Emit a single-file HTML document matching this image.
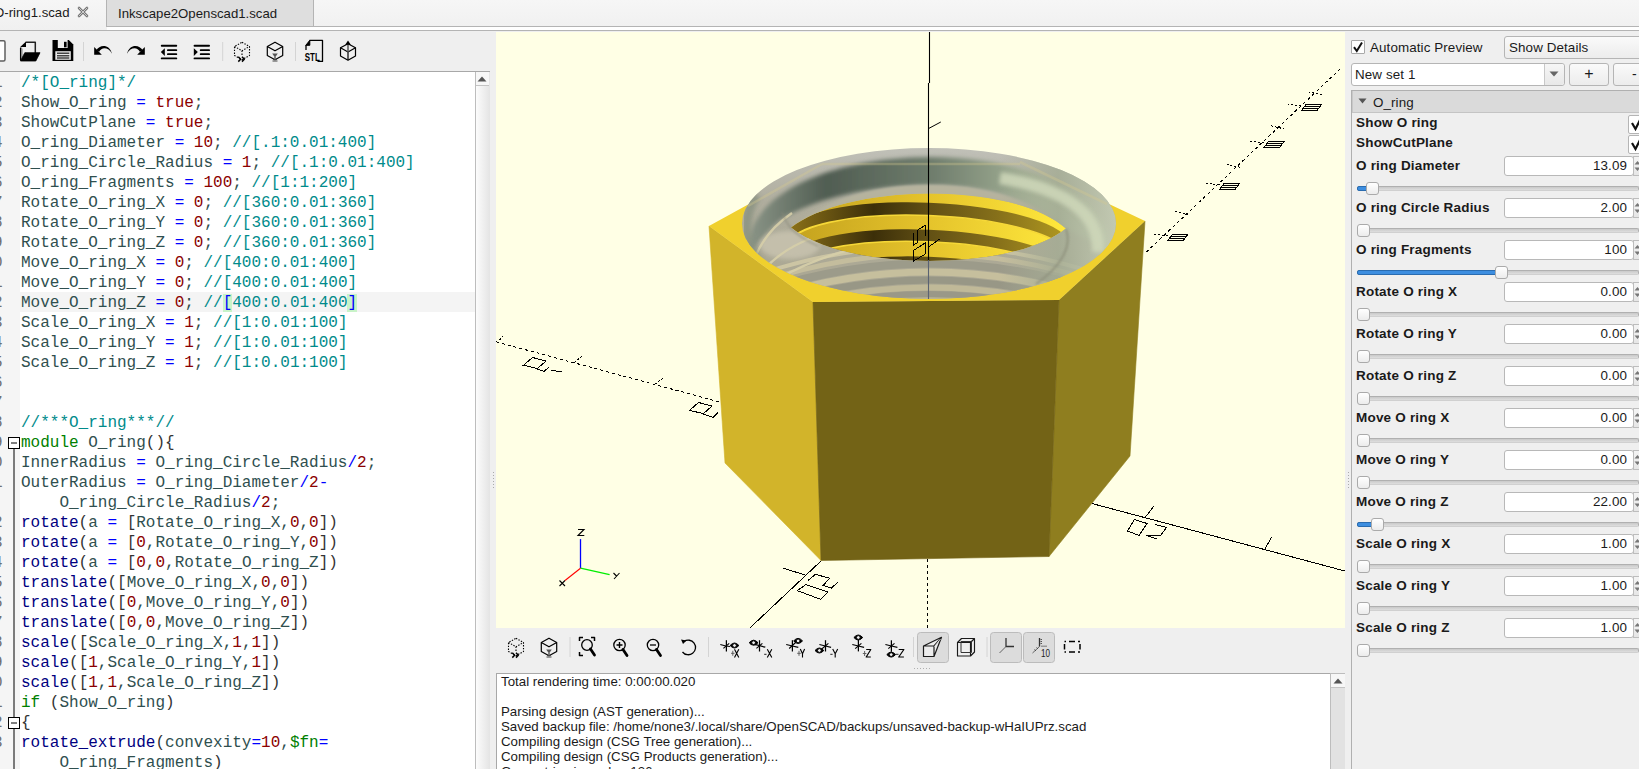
<!DOCTYPE html>
<html><head><meta charset="utf-8">
<style>
*{box-sizing:border-box;margin:0;padding:0}
html,body{width:1639px;height:769px;overflow:hidden;background:#efefef;font-family:"Liberation Sans",sans-serif;font-size:13px;color:#1a1a1a}
.a{position:absolute}
#tabs{left:0;top:0;width:1639px;height:31px;background:linear-gradient(#f6f6f6,#f0f0f0)}
.code{font-family:"Liberation Mono",monospace;font-size:16px;line-height:20px;white-space:pre;color:#2f4f4f}
.c{color:#008b8b}.n{color:#8b0000}.o{color:#0000ff}.k{color:#008000}.b{color:#000080}.p{color:#333}
.lbl{font-weight:bold;font-size:13.5px;letter-spacing:0.2px}
.spin{background:#fff;border:1px solid #b8b8b8;border-radius:3px;height:20px;width:130px;left:1504px;text-align:right;padding-right:6px;line-height:18px}
.groove{left:1357px;width:282px;height:5px;background:linear-gradient(#c9c9c9,#dedede);border:1px solid #b0b0b0;border-bottom-color:#d0d0d0;border-radius:2px}
.fill{left:1357px;height:5px;background:#3d8ee0;border:1px solid #2a6cb0;border-radius:2px}
.handle{width:13px;height:13px;background:linear-gradient(#fff,#ececec);border:1px solid #aaa;border-radius:3px}
.bm{background:#c8f3c8;color:#0000ff}
.ui{font-size:13.4px;letter-spacing:0.1px}
</style></head><body>
<!-- tab bar -->
<div id="tabs" class="a"></div>
<div class="a" style="left:106px;top:0;width:208px;height:27px;background:#dedede;border:1px solid #b4b4b4;border-top:none"></div>
<div class="a" style="left:106px;top:26px;width:1533px;height:1px;background:#b4b4b4"></div>
<div class="a" style="left:107px;top:27px;width:1532px;height:3px;background:#fff"></div>
<div class="a" style="left:0;top:30px;width:1639px;height:1px;background:#b4b4b4"></div>
<div class="a" style="left:-6px;top:4px;line-height:17px;font-size:13.2px">O-ring1.scad</div>
<div class="a" style="left:118px;top:5px;line-height:17px;font-size:13.2px">Inkscape2Openscad1.scad</div>
<svg class="a" style="left:77px;top:6px" width="12" height="12"><path d="M2 2L10 10M10 2L2 10" stroke="#777" stroke-width="2.6" stroke-linecap="round"/><path d="M2 2L10 10M10 2L2 10" stroke="#ccc" stroke-width="1" stroke-linecap="round"/></svg>

<svg class="a" style="left:0;top:0" width="370" height="71" viewBox="0 0 370 71">
<g fill="none" stroke="#000" stroke-linejoin="round">
 <!-- new doc clipped -->
 <rect x="-10" y="40.8" width="15" height="20.3" rx="1.5" fill="#fff" stroke="#606060" stroke-width="1.5"/>
 <!-- open folder -->
 <path d="M25.8 42.3H35.3V53" stroke-width="1.5" stroke="#222"/>
 <path d="M20.7 47.5V60.5" stroke-width="1.5"/>
 <path d="M22.3 48.5V58.5" stroke-width="1" stroke="#aaa"/>
 <path d="M20.2 47L26 41.5V47Z" fill="#000" stroke="none"/>
 <path d="M20.5 61L24.8 52.7H40L35.8 61Z" fill="#000" stroke="#000" stroke-width="0.8"/>
 <!-- save -->
 <path d="M52.5 40H68.8L73.3 44.5V61H52.5Z" fill="#000" stroke="none"/>
 <rect x="57.8" y="40" width="9.8" height="8" fill="#efefef" stroke="none"/>
 <rect x="64" y="41.8" width="2.6" height="5.5" fill="#000" stroke="none"/>
 <rect x="55.3" y="51.2" width="15.5" height="8.6" fill="#e8e8e8" stroke="none"/>
 <path d="M57 53.3H69.3M57 55.7H69.3M57 58H69.3" stroke="#444" stroke-width="1.4"/>
 <!-- separators -->
 <path d="M83.5 42V61M222.7 42V61M295.5 42V61" stroke="#d4d4d4" stroke-width="1"/>
 <!-- undo -->
 <path d="M96.3 50.2C99.5 44.5 109.5 43.5 112 53.8C108.5 47 101.5 46.8 99.2 51.8Z" fill="#000" stroke="none"/>
 <path d="M94.2 47V54.7H101.8Z" fill="#000" stroke="none"/>
 <!-- redo -->
 <path d="M142.7 50.2C139.5 44.5 129.5 43.5 127 53.8C130.5 47 137.5 46.8 139.8 51.8Z" fill="#000" stroke="none"/>
 <path d="M144.8 47V54.7H137.2Z" fill="#000" stroke="none"/>
 <!-- unindent -->
 <g fill="#000" stroke="none">
  <rect x="160.8" y="44.8" width="16.4" height="1.9" rx="0.9"/>
  <rect x="167" y="49.2" width="10.2" height="1.9" rx="0.9"/>
  <rect x="167" y="53.2" width="10.2" height="1.9" rx="0.9"/>
  <rect x="160.8" y="57.4" width="16.4" height="1.9" rx="0.9"/>
  <path d="M160.8 52.1L164.8 48.3V55.9Z"/>
  <rect x="193.6" y="44.8" width="16.4" height="1.9" rx="0.9"/>
  <rect x="199.8" y="49.2" width="10.2" height="1.9" rx="0.9"/>
  <rect x="199.8" y="53.2" width="10.2" height="1.9" rx="0.9"/>
  <rect x="193.6" y="57.4" width="16.4" height="1.9" rx="0.9"/>
  <path d="M197.8 52.1L193.8 48.3V55.9Z"/>
 </g>
 <!-- preview dotted cube -->
 <g stroke-width="1.1" stroke-dasharray="1.4 1.4">
  <path d="M242 42.3L249.5 46.5V55.5L242 59.7L234.5 55.5V46.5Z"/>
  <path d="M234.5 46.5L242 50.7L249.5 46.5M242 50.7V56"/>
 </g>
 <path d="M238.3 56.8L240.6 59.3L238.3 61.6M242 56.8L244.3 59.3L242 61.6" stroke-width="1.5"/>
 <!-- render cube -->
 <g stroke-width="1.2">
  <path d="M275 42.2L282.7 46.5V55.5L275 59.8L267.3 55.5V46.5Z"/>
  <path d="M267.3 46.5L275 50.8L282.7 46.5"/>
 </g>
 <path d="M272.2 53.5H277.8L275 57.5Z" fill="#555" stroke="none"/>
 <path d="M275 57V59M272.5 61H277.5M273 59.5H277" stroke="#444" stroke-width="1.2"/>
 <!-- STL -->
 <path d="M309.5 40.3H322.5V61.4H317.5" stroke-width="1.3"/>
 <path d="M305.8 45.3L309.8 40.3V45.3Z" fill="#000" stroke="#000" stroke-width="1"/>
 <path d="M306 45V50" stroke-width="1.3"/>
 <text x="304.8" y="61.3" font-family="Liberation Sans" font-weight="bold" font-size="11.5" fill="#000" stroke="none" textLength="15" lengthAdjust="spacingAndGlyphs">STL</text>
 <!-- export cube -->
 <g stroke-width="1.2">
  <path d="M348 43.8L355.5 47.8V56L348 60.2L340.5 56V47.8Z"/>
  <path d="M340.5 47.8L348 52L355.5 47.8M348 52V60"/>
 </g>
 <path d="M348 53V43" stroke="#555" stroke-width="1.5"/>
 <path d="M345.2 44.8L348 40.6L350.8 44.8Z" fill="#000" stroke="none"/>
</g>
</svg>

<!-- editor -->
<div class="a" style="left:0;top:71px;width:490px;height:698px;background:#fff;border-top:1px solid #a8a8a8;border-right:1px solid #a8a8a8"></div>
<div class="a" style="left:0;top:72px;width:20px;height:697px;background:#f5f5f5"></div>
<div class="a" style="left:20px;top:292px;width:455px;height:20px;background:#f4f4f4"></div>
<div id="code" class="a code" style="left:21px;top:73px"><span class="c">/*[O_ring]*/</span>
Show_O_ring <span class="o">=</span> <span class="n">true</span>;
ShowCutPlane <span class="o">=</span> <span class="n">true</span>;
O_ring_Diameter <span class="o">=</span> <span class="n">10</span>; <span class="c">//[.1:0.01:400]</span>
O_ring_Circle_Radius <span class="o">=</span> <span class="n">1</span>; <span class="c">//[.1:0.01:400]</span>
O_ring_Fragments <span class="o">=</span> <span class="n">100</span>; <span class="c">//[1:1:200]</span>
Rotate_O_ring_X <span class="o">=</span> <span class="n">0</span>; <span class="c">//[360:0.01:360]</span>
Rotate_O_ring_Y <span class="o">=</span> <span class="n">0</span>; <span class="c">//[360:0.01:360]</span>
Rotate_O_ring_Z <span class="o">=</span> <span class="n">0</span>; <span class="c">//[360:0.01:360]</span>
Move_O_ring_X <span class="o">=</span> <span class="n">0</span>; <span class="c">//[400:0.01:400]</span>
Move_O_ring_Y <span class="o">=</span> <span class="n">0</span>; <span class="c">//[400:0.01:400]</span>
Move_O_ring_Z <span class="o">=</span> <span class="n">0</span>; <span class="c">//<span class="bm">[</span>400:0.01:400<span class="bm">]</span></span>
Scale_O_ring_X <span class="o">=</span> <span class="n">1</span>; <span class="c">//[1:0.01:100]</span>
Scale_O_ring_Y <span class="o">=</span> <span class="n">1</span>; <span class="c">//[1:0.01:100]</span>
Scale_O_ring_Z <span class="o">=</span> <span class="n">1</span>; <span class="c">//[1:0.01:100]</span>


<span class="c">//***O_ring***//</span>
<span class="k">module</span> O_ring<span class="p">(</span><span class="p">)</span><span class="p">{</span>
InnerRadius <span class="o">=</span> O_ring_Circle_Radius<span class="o">/</span><span class="n">2</span>;
OuterRadius <span class="o">=</span> O_ring_Diameter<span class="o">/</span><span class="n">2</span><span class="o">-</span>
    O_ring_Circle_Radius<span class="o">/</span><span class="n">2</span>;
<span class="b">rotate</span><span class="p">(</span>a <span class="o">=</span> <span class="p">[</span>Rotate_O_ring_X,<span class="n">0</span>,<span class="n">0</span><span class="p">]</span><span class="p">)</span>
<span class="b">rotate</span><span class="p">(</span>a <span class="o">=</span> <span class="p">[</span><span class="n">0</span>,Rotate_O_ring_Y,<span class="n">0</span><span class="p">]</span><span class="p">)</span>
<span class="b">rotate</span><span class="p">(</span>a <span class="o">=</span> <span class="p">[</span><span class="n">0</span>,<span class="n">0</span>,Rotate_O_ring_Z<span class="p">]</span><span class="p">)</span>
<span class="b">translate</span><span class="p">(</span><span class="p">[</span>Move_O_ring_X,<span class="n">0</span>,<span class="n">0</span><span class="p">]</span><span class="p">)</span>
<span class="b">translate</span><span class="p">(</span><span class="p">[</span><span class="n">0</span>,Move_O_ring_Y,<span class="n">0</span><span class="p">]</span><span class="p">)</span>
<span class="b">translate</span><span class="p">(</span><span class="p">[</span><span class="n">0</span>,<span class="n">0</span>,Move_O_ring_Z<span class="p">]</span><span class="p">)</span>
<span class="b">scale</span><span class="p">(</span><span class="p">[</span>Scale_O_ring_X,<span class="n">1</span>,<span class="n">1</span><span class="p">]</span><span class="p">)</span>
<span class="b">scale</span><span class="p">(</span><span class="p">[</span><span class="n">1</span>,Scale_O_ring_Y,<span class="n">1</span><span class="p">]</span><span class="p">)</span>
<span class="b">scale</span><span class="p">(</span><span class="p">[</span><span class="n">1</span>,<span class="n">1</span>,Scale_O_ring_Z<span class="p">]</span><span class="p">)</span>
<span class="k">if</span> <span class="p">(</span>Show_O_ring<span class="p">)</span>
<span class="p">{</span>
<span class="b">rotate_extrude</span><span class="p">(</span>convexity<span class="o">=</span><span class="n">10</span>,<span class="k">$fn</span><span class="o">=</span>
    O_ring_Fragments<span class="p">)</span></div>
<div class="a code" style="left:-41.5px;top:73px;width:44px;text-align:right;color:#707070">1
2
3
4
5
6
7
8
9
10
11
12
13
14
15
16
17
18
19
20
21

22
23
24
25
26
27
28
29
30
31
32
33
</div>

<svg class="a" style="left:0;top:430px" width="22" height="339"><g fill="#fff" stroke="#000" stroke-width="1"><rect x="8.5" y="7.5" width="11" height="11"/><rect x="8.5" y="287.5" width="11" height="11"/></g><path d="M11 13H17M11 293H17M14 18.5V287.5M14 298.5V339" stroke="#000" stroke-width="1"/></svg>
<svg class="a" style="left:490px;top:470px" width="6" height="20"><path d="M3.5 2V19" stroke="#aaa" stroke-dasharray="1 2"/></svg>
<svg class="a" style="left:1345px;top:470px" width="6" height="20"><path d="M3.5 2V19" stroke="#aaa" stroke-dasharray="1 2"/></svg>
<!-- viewer -->
<svg class="a" style="left:496px;top:32px" width="849" height="596" viewBox="496 32 849 596" shape-rendering="geometricPrecision">
<defs>
<clipPath id="hole"><path d="M791 227.5C818 207 868 194 929 193.5C992 194 1040 206 1066 228.5C1040 249 992 260.5 929 261C868 260.5 818 249 791 227.5Z"/></clipPath>
<linearGradient id="gdark" x1="791" x2="1066" gradientUnits="userSpaceOnUse"><stop offset="0" stop-color="#8a7018"/><stop offset="0.3" stop-color="#3c2f09"/><stop offset="0.5" stop-color="#625014"/><stop offset="0.75" stop-color="#86701a"/><stop offset="1" stop-color="#b09820"/></linearGradient>
<linearGradient id="gyel" x1="791" x2="1066" gradientUnits="userSpaceOnUse"><stop offset="0" stop-color="#c4a21e"/><stop offset="0.45" stop-color="#e2c02a"/><stop offset="1" stop-color="#ffe83c"/></linearGradient>
<linearGradient id="gback" x1="745" x2="1115" gradientUnits="userSpaceOnUse"><stop offset="0" stop-color="#8e988a"/><stop offset="0.22" stop-color="#505d52"/><stop offset="0.5" stop-color="#6e7c6c"/><stop offset="0.8" stop-color="#a9b69a"/><stop offset="1" stop-color="#c8d2b2"/></linearGradient>
<linearGradient id="gfront" x1="745" x2="1115" gradientUnits="userSpaceOnUse"><stop offset="0" stop-color="#b5b3a3"/><stop offset="0.3" stop-color="#c2bca4"/><stop offset="0.6" stop-color="#b0aa90"/><stop offset="1" stop-color="#9ea28a"/></linearGradient>
<linearGradient id="grim" x1="0" y1="148" x2="0" y2="300" gradientUnits="userSpaceOnUse"><stop offset="0" stop-color="#c4c4bc"/><stop offset="1" stop-color="#b8b6a6"/></linearGradient>
<clipPath id="torus"><ellipse cx="929" cy="223.5" rx="187" ry="75.5"/></clipPath>
</defs>
<rect x="496" y="32" width="849" height="596" fill="#ffffe5"/>
<g stroke="#000" stroke-width="1" fill="none" stroke-dasharray="3 3" shape-rendering="crispEdges">
<path d="M496 341.8L722 402.6"/>
<path d="M1146.4 252L1342.3 66.9"/>
<path d="M927.6 559V628"/>
</g>
<g stroke="#000" stroke-width="1" fill="none" shape-rendering="crispEdges">
<path d="M497 343L503 336" stroke-dasharray="2 2"/>
<path d="M574.2 362.5L581.5 356.4" stroke-dasharray="2 2"/>
<path d="M655 384.2L664 377.4" stroke-dasharray="2 2"/>
<path d="M523.5 365.3L532.5 357.5L546 361L537.5 368.5Z"/>
<path d="M536 368.5L544 371.5L549.5 366.5M551 370L561.5 372"/>
<path d="M689.5 410.5L698.5 402.5L712 406L703.5 413.5Z"/>
<path d="M703 414L713 417.5L718 412.5"/>
</g>
<g stroke="#000" stroke-width="1" fill="none" shape-rendering="crispEdges">
<path d="M1167.8 240.5L1172.3 234.5L1187.8 234.5L1183.3 240.5Z" stroke-width="1"/>
<path d="M1170.3 236.5H1185.8M1169.3 238.5H1184.3" stroke-width="1"/>
<path d="M1153.8 234.0L1167.8 236.0" stroke-dasharray="2 2"/>
<path d="M1174.8 211.1L1187.8 214.1" stroke-dasharray="2 2"/>
<path d="M1219.6 189.5L1224.1 183.5L1239.6 183.5L1235.1 189.5Z" stroke-width="1"/>
<path d="M1222.1 185.5H1237.6M1221.1 187.5H1236.1" stroke-width="1"/>
<path d="M1205.6 183.0L1219.6 185.0" stroke-dasharray="2 2"/>
<path d="M1226.6 164.2L1239.6 167.2" stroke-dasharray="2 2"/>
<path d="M1264.0 147.5L1268.5 141.5L1284.0 141.5L1279.5 147.5Z" stroke-width="1"/>
<path d="M1266.5 143.5H1282.0M1265.5 145.5H1280.5" stroke-width="1"/>
<path d="M1250.0 141.0L1264.0 143.0" stroke-dasharray="2 2"/>
<path d="M1271.0 125.8L1284.0 128.8" stroke-dasharray="2 2"/>
<path d="M1301.5 110.5L1306.0 104.5L1321.5 104.5L1317.0 110.5Z" stroke-width="1"/>
<path d="M1304.0 106.5H1319.5M1303.0 108.5H1318.0" stroke-width="1"/>
<path d="M1287.5 104.0L1301.5 106.0" stroke-dasharray="2 2"/>
<path d="M1308.5 91.8L1321.5 94.8" stroke-dasharray="2 2"/>
</g>
<path d="M709.0 226.0L813.0 302.0L821.0 560.5L725.0 463.0Z" fill="#d2b42a" stroke="#d2b42a" stroke-width="0.6"/>
<path d="M1059.0 300.0L1145.0 221.0L1130.0 456.0L1049.0 556.5Z" fill="#8f7e1f" stroke="#8f7e1f" stroke-width="0.6"/>
<path d="M813.0 302.0L1059.0 300.0L1049.0 556.5L821.0 560.5Z" fill="#736316" stroke="#736316" stroke-width="0.6"/>
<path d="M709.0 226.0L822.0 164.0L1020.0 162.0L1145.0 221.0L1059.0 300.0L813.0 302.0Z" fill="#f0d02d" />
<g clip-path="url(#hole)">
<rect x="780" y="185" width="300" height="90" fill="url(#gyel)"/>
<g transform="translate(929 0) matrix(1 0.04 0 1 0 0) translate(-929 0)">
<ellipse cx="929" cy="239.7" rx="141" ry="37" fill="url(#gdark)"/>
<ellipse cx="929" cy="252.5" rx="141" ry="37" fill="url(#gyel)" stroke="#f6d838" stroke-width="1.6"/>
<ellipse cx="929" cy="266.7" rx="141" ry="37" fill="url(#gdark)"/>
<ellipse cx="929" cy="278.7" rx="141" ry="37" fill="url(#gyel)" stroke="#f6d838" stroke-width="1.6"/>
<ellipse cx="929" cy="293.8" rx="141" ry="37" fill="url(#gdark)"/>
<ellipse cx="929" cy="305.0" rx="141" ry="37" fill="url(#gyel)" stroke="#f6d838" stroke-width="1.6"/>
</g>
</g>
<defs><clipPath id="ring"><path clip-rule="evenodd" d="M742 223.5A187 75.5 0 1 0 1116 223.5A187 75.5 0 1 0 742 223.5Z M791 227.5C818 207 868 194 929 193.5C992 194 1040 206 1066 228.5C1040 249 992 260.5 929 261C868 260.5 818 249 791 227.5Z"/></clipPath>
<linearGradient id="gbase" x1="0" y1="148" x2="0" y2="300" gradientUnits="userSpaceOnUse"><stop offset="0" stop-color="#c0c0b8"/><stop offset="0.35" stop-color="#b0ae9e"/><stop offset="1" stop-color="#aaa690"/></linearGradient>
<linearGradient id="gright" x1="1000" x2="1116" gradientUnits="userSpaceOnUse"><stop offset="0" stop-color="#a8ae96" stop-opacity="0"/><stop offset="0.5" stop-color="#a4ac94" stop-opacity="0.8"/><stop offset="1" stop-color="#c4ccb4" stop-opacity="0.9"/></linearGradient>
<filter id="bl" x="-10%" y="-30%" width="120%" height="160%"><feGaussianBlur stdDeviation="2.2"/></filter>
<filter id="bl1" x="-10%" y="-30%" width="120%" height="160%"><feGaussianBlur stdDeviation="1"/></filter>
</defs>
<g clip-path="url(#ring)">
<rect x="740" y="145" width="380" height="160" fill="url(#gbase)"/>
<path filter="url(#bl)" fill="url(#gback)" d="M750 254C740 212 800 159 929 157C1040 158 1112 198 1110 250L1072 232C1040 203 992 185 929 185C870 186 815 198 780 220C768 230 758 242 750 254Z"/>
<path filter="url(#bl1)" fill="#b6b39e" d="M784 234C818 203 868 185 929 185C992 185 1040 203 1072 234L1066 228.5C1040 206 992 194 929 193.5C868 194 818 207 791 227.5Z"/>
<ellipse filter="url(#bl)" cx="790" cy="245" rx="30" ry="14" fill="#cdc8b4" opacity="0.7"/>
<path d="M740 298.5Q929 228.5 1118 298.5" stroke="#9c9b8a" stroke-width="8.0" fill="none"/>
<path d="M740 307.0Q929 237.0 1118 307.0" stroke="#c6bf9d" stroke-width="7.0" fill="none"/>
<path d="M740 315.0Q929 245.0 1118 315.0" stroke="#989786" stroke-width="7.0" fill="none"/>
<path d="M740 322.5Q929 252.5 1118 322.5" stroke="#c0b998" stroke-width="6.0" fill="none"/>
<path d="M740 329.0Q929 259.0 1118 329.0" stroke="#9a9888" stroke-width="6.0" fill="none"/>
<path d="M740 335.0Q929 265.0 1118 335.0" stroke="#bab496" stroke-width="5.0" fill="none"/>
<path d="M740 289.0Q929 219.0 1118 289.0" stroke="#c4bd9d" stroke-width="5.0" fill="none"/>
<path d="M740 281.0Q929 211.0 1118 281.0" stroke="#ccc5a4" stroke-width="4.0" fill="none"/>
<path d="M753 262Q764 232 792 213M763 271Q780 250 814 237M778 279Q812 259 860 247" stroke="#d6cea9" stroke-width="2.4" fill="none" opacity="0.9"/>
<path filter="url(#bl1)" d="M782 212Q786 224 794 231Q802 239 818 246" stroke="#8a8a7a" stroke-width="1.4" fill="none" opacity="0.7"/>
<path filter="url(#bl)" d="M756 195C741 220 743 250 768 274" stroke="#86907f" stroke-width="10" fill="none" opacity="0.75"/>
<rect x="990" y="150" width="130" height="150" fill="url(#gright)"/>
<path filter="url(#bl)" d="M1000 178C1062 188 1100 212 1098 252" stroke="#cfd8ba" stroke-width="12" fill="none" opacity="0.85"/>
<path filter="url(#bl1)" d="M1066 229C1072 246 1062 266 1036 284" stroke="#8c8e7a" stroke-width="2" fill="none" opacity="0.8"/>
<path d="M1020 162L1107 204M822 164L748 206M822 164H1020" stroke="#d4c890" stroke-width="2.5" fill="none" opacity="0.35"/>
</g>
<path d="M929.5 32V83M928.5 83V260" stroke="#000" stroke-width="1.1"/>
<path d="M928.5 260V299" stroke="#5a6272" stroke-width="1.1"/>
<path d="M929 128.3L940.8 122" stroke="#000" stroke-width="1"/>
<path d="M918.3 229.5L925 225.5V236.4M917.8 230.2V242M913.4 233.3V245.1L917.8 242.3M913.7 250.4L925 243V254.2L913.7 261ZM929 246.7L939.3 239.2" stroke="#000" stroke-width="1" fill="none" shape-rendering="crispEdges"/>
<g stroke="#000" stroke-width="1" fill="none" shape-rendering="crispEdges">
<path d="M821 561L750.4 627.5"/>
<path d="M783.3 568.3L805.3 575"/>
<path d="M797.3 590.6L805.8 584.6L827.9 591.9L820.5 599.3Z"/>
<path d="M808 580.6L815.4 574.4L829.8 578.2L823 585.5L831.5 588L838.5 581.5"/>
<path d="M1092.3 503.6L1345.3 571.1"/>
<path d="M1145.5 517L1153.7 506.2M1264.2 550.1L1271.7 537"/>
<path d="M1127.5 531L1134.5 519.5L1147 523.5L1139 535.5Z"/>
<path d="M1155.5 524.5L1166.5 527.5L1160.5 535.5L1146.5 535.5L1157 539"/>
</g>
<path d="M580.5 568.2V539.1" stroke="#0000ff" stroke-width="1.3"/>
<path d="M580.5 568.2L609.6 574.6" stroke="#00ee00" stroke-width="1.3"/>
<path d="M580.5 568.2L565 580.5" stroke="#ff0000" stroke-width="1.1"/>
<path d="M578 529.5H584L578 535.5H584.3" stroke="#000" stroke-width="1.1" fill="none"/>
<path d="M613.5 573L616.5 576M619.5 573L614 579" stroke="#000" stroke-width="1.1" fill="none"/>
<path d="M559.5 580.5L565 586M565 580.5L559.5 586" stroke="#000" stroke-width="1.1" fill="none"/>
</svg>

<!-- console -->
<div class="a" style="left:496px;top:673px;width:849px;height:96px;background:#fff;border:1px solid #a8a8a8;border-bottom:none"></div>

<svg class="a" style="left:496px;top:628px" width="849" height="45" viewBox="496 628 849 45">
<g fill="none" stroke="#000" stroke-linejoin="round">
 <!-- separators -->
 <path d="M570 637V657M708.5 637V657M913.5 637V657M987 637V657" stroke="#d4d4d4"/>
 <!-- preview dotted cube -->
 <g stroke-width="1.1" stroke-dasharray="1.4 1.4">
  <path d="M516 638.3L523.5 642.5V651.5L516 655.7L508.5 651.5V642.5Z"/>
  <path d="M508.5 642.5L516 646.7L523.5 642.5M516 646.7V652"/>
 </g>
 <path d="M512.3 652.8L514.6 655.3L512.3 657.6M516 652.8L518.3 655.3L516 657.6" stroke-width="1.5"/>
 <!-- render cube -->
 <g stroke-width="1.2">
  <path d="M549 638.2L556.7 642.5V651.5L549 655.8L541.3 651.5V642.5Z"/>
  <path d="M541.3 642.5L549 646.8L556.7 642.5"/>
 </g>
 <path d="M546.2 649.5H551.8L549 653.5Z" fill="#555" stroke="none"/>
 <path d="M549 653V655M546.5 657H551.5M547 655.5H551" stroke="#444" stroke-width="1.2"/>
 <!-- zoom all -->
 <path d="M579.5 641V637.5H583M591 637.5H594.5V641M579.5 652V655.5H583" stroke-width="1.5"/>
 <circle cx="587" cy="645" r="5.3" stroke-width="1.3"/>
 <path d="M590.5 649L594.5 655" stroke-width="2.8" stroke-linecap="round"/>
 <!-- zoom in -->
 <circle cx="619.5" cy="645" r="5.7" stroke-width="1.3"/>
 <path d="M616.5 645H622.5M619.5 642V648" stroke-width="1.4"/>
 <path d="M623 649.5L627 655.5" stroke-width="2.8" stroke-linecap="round"/>
 <!-- zoom out -->
 <circle cx="653" cy="645" r="5.7" stroke-width="1.3"/>
 <path d="M650 645H656" stroke-width="1.8" stroke="#444"/>
 <path d="M656.5 649.5L660.5 655.5" stroke-width="2.8" stroke-linecap="round"/>
 <!-- reset view -->
 <path d="M684 641.5A7.3 7.3 0 1 1 682.5 652" stroke-width="1.3"/>
 <path d="M681 639.5L686.5 640.5L683 644Z" fill="#000" stroke="none"/>
 <!-- view icons -->
<path d="M726.4 640.2V651.5" stroke="#000" stroke-width="1.25"/><path d="M720.3 644.5Q726.4 646.3 730.0 646.5" stroke="#000" stroke-width="1.25" fill="none"/><path d="M723.4 648.4L729.2 643.3" stroke="#000" stroke-width="1.1"/>
<path d="M730.1 645.5Q734.5 640.5 738.9 645.5Q734.5 650.5 730.1 645.5Z" fill="#000"/><circle cx="734.5" cy="645.5" r="1.9" fill="#efefef"/>
<path d="M734.5 649.2L738.8 657.4M738.8 649.2L734.5 657.4" stroke="#000" stroke-width="1.1"/>
<path d="M731.0 653.3H734.6M732.8 650.8V655.8" stroke="#555" stroke-width="0.9"/>
<path d="M759.5 640.2V651.5" stroke="#000" stroke-width="1.25"/><path d="M750.3 643.7Q759.5 645.5 765.3 647.2" stroke="#000" stroke-width="1.25" fill="none"/><path d="M756.4 648.4L762.4 643.3" stroke="#000" stroke-width="1.1"/>
<path d="M749.2 642.7Q753.6 637.7 758.0 642.7Q753.6 647.7 749.2 642.7Z" fill="#000"/><circle cx="753.6" cy="642.7" r="1.9" fill="#efefef"/>
<path d="M767.3 649.2L771.8 657.4M771.8 649.2L767.3 657.4" stroke="#000" stroke-width="1.1"/>
<path d="M764.2 654.3H766.5" stroke="#222" stroke-width="1"/>
<path d="M792.4 640.2V651.5" stroke="#000" stroke-width="1.25"/><path d="M786.2 644.5Q792.4 646.3 798.3 647.3" stroke="#000" stroke-width="1.25" fill="none"/><path d="M789.2 648.5L795.6 642.5" stroke="#000" stroke-width="1.1"/>
<path d="M793.7 640.9Q798.1 635.9 802.5 640.9Q798.1 645.9 793.7 640.9Z" fill="#000"/><circle cx="798.1" cy="640.9" r="1.9" fill="#efefef"/>
<path d="M800.3 649.0L802.5 653.7L804.6 649.0M802.5 653.7V657.5" stroke="#000" stroke-width="1.1" fill="none"/>
<path d="M797.2 653.3H800.8M799.0 650.8V655.8" stroke="#555" stroke-width="0.9"/>
<path d="M825.5 640.2V651.5" stroke="#000" stroke-width="1.25"/><path d="M819.4 644.5Q825.5 646.3 831.1 647.3" stroke="#000" stroke-width="1.25" fill="none"/><path d="M821.7 649.0L828.4 643.3" stroke="#000" stroke-width="1.1"/>
<path d="M815.0 650.5Q819.4 645.5 823.8 650.5Q819.4 655.5 815.0 650.5Z" fill="#000"/><circle cx="819.4" cy="650.5" r="1.9" fill="#efefef"/>
<path d="M832.7 649.0L835.2 653.7L837.7 649.0M835.2 653.7V657.5" stroke="#000" stroke-width="1.1" fill="none"/>
<path d="M830.3 654.3H832.6" stroke="#222" stroke-width="1"/>
<path d="M853.9 637.5Q858.3 632.5 862.7 637.5Q858.3 642.5 853.9 637.5Z" fill="#000"/><circle cx="858.3" cy="637.5" r="1.9" fill="#efefef"/>
<path d="M858.4 640.0V651.4" stroke="#000" stroke-width="1.25"/><path d="M852.3 644.5Q858.4 646.3 864.1 647.3" stroke="#000" stroke-width="1.25" fill="none"/><path d="M855.2 648.6L861.4 643.3" stroke="#000" stroke-width="1.1"/>
<path d="M866.2 649.5H870.8L866.2 657.0H870.8" stroke="#000" stroke-width="1.2" fill="none"/>
<path d="M862.8 653.5H866.4M864.6 651.0V656.0" stroke="#555" stroke-width="0.9"/>
<path d="M891.4 640.3V651.8" stroke="#000" stroke-width="1.25"/><path d="M885.4 644.5Q891.4 646.3 897.4 647.3" stroke="#000" stroke-width="1.25" fill="none"/><path d="M888.3 648.6L894.5 643.3" stroke="#000" stroke-width="1.1"/>
<path d="M886.8 654.6Q891.2 649.6 895.6 654.6Q891.2 659.6 886.8 654.6Z" fill="#000"/><circle cx="891.2" cy="654.6" r="1.9" fill="#efefef"/>
<path d="M898.7 649.5H903.9L898.7 657.0H903.9" stroke="#000" stroke-width="1.2" fill="none"/>
<path d="M895.5 654.3H898.5" stroke="#222" stroke-width="1"/>
 <!-- checked buttons -->
 <rect x="917.5" y="632.5" width="31" height="30" rx="3" fill="#dcdcdc" stroke="#bcbcbc"/>
 <rect x="990.5" y="632.5" width="31" height="30" rx="3" fill="#dcdcdc" stroke="#bcbcbc"/>
 <rect x="1023.5" y="632.5" width="31" height="30" rx="3" fill="#dcdcdc" stroke="#bcbcbc"/>
 <!-- perspective -->
 <path d="M923.5 646L941.5 637.3L934 656.5H923.5ZM934 646L941.5 637.3M923.5 646H934V656.5" fill="#ececec" stroke="#1a1a1a" stroke-width="1.2"/>
 <path d="M934.5 646.5L940.5 639" stroke="#fff" stroke-width="0.8"/>
 <!-- ortho -->
 <path d="M957.5 642.5L961.5 638.5H974.5V652L970.5 656H957.5ZM957.5 642.5H970.5V656M970.5 642.5L974.5 638.5" stroke="#1a1a1a" stroke-width="1.15"/>
 <path d="M961 641.5H971.5V652.5H961Z" stroke="#333" stroke-width="1"/>
 <!-- axes -->
 <path d="M1006 638V646.5H1014" stroke="#333" stroke-width="1.3"/>
 <path d="M1006 646.5L999.5 653" stroke="#444" stroke-width="0.8"/>
 <!-- scale markers -->
 <path d="M1039.5 638V646.5" stroke="#333" stroke-width="1.3"/>
 <path d="M1039.5 646.5L1032.5 653" stroke="#444" stroke-width="0.8"/>
 <path d="M1040.5 639.5H1042M1040.5 641.5H1042M1040.5 643.5H1042M1042 645.5V647M1044 645.5V647M1046 645.5V647M1034.5 649.5L1036 651M1036.5 647.5L1038 649" stroke="#444" stroke-width="0.9"/>
 <text x="1041" y="657" font-family="Liberation Sans" font-size="10" fill="#222" stroke="none" textLength="9" lengthAdjust="spacingAndGlyphs">10</text>
 <!-- edges -->
 <path d="M1064.5 641.5H1066M1069 641.5H1075M1078 641.5H1080M1064.5 652H1066M1069 652H1075M1078 652H1080M1064.5 644V649.5M1080 644V649.5" stroke-width="1.5"/>
</g>
<g fill="#b0b0b0"><rect x="914" y="668" width="1" height="1"/><rect x="917" y="668" width="1" height="1"/><rect x="920" y="668" width="1" height="1"/><rect x="923" y="668" width="1" height="1"/><rect x="926" y="668" width="1" height="1"/><rect x="929" y="668" width="1" height="1"/></g>
</svg>
<div class="a" style="left:501px;top:674px;line-height:15px;white-space:pre;font-size:13.3px">Total rendering time: 0:00:00.020

Parsing design (AST generation)...
Saved backup file: /home/none3/.local/share/OpenSCAD/backups/unsaved-backup-wHaIUPrz.scad
Compiling design (CSG Tree generation)...
Compiling design (CSG Products generation)...
Geometries in cache: 136</div>
<div class="a" style="left:1330px;top:673px;width:15px;height:96px;background:#e2e2e2;border-left:1px solid #bdbdbd;border-top:1px solid #bdbdbd"></div>
<div class="a" style="left:1331px;top:674px;width:14px;height:14px;background:#f7f7f7;border-bottom:1px solid #c4c4c4"></div>
<svg class="a" style="left:1333px;top:678px" width="10" height="6"><path d="M0.5 5.5H9.5L5 0.5Z" fill="#555"/></svg>
<!-- editor scrollbar -->
<div class="a" style="left:475px;top:72px;width:15px;height:697px;background:linear-gradient(90deg,#fcfcfc,#e4e4e4);border-left:1px solid #bdbdbd"></div>
<div class="a" style="left:476px;top:72px;width:13px;height:14px;background:#f7f7f7;border-bottom:1px solid #c4c4c4"></div>
<svg class="a" style="left:477px;top:76px" width="10" height="6"><path d="M0.5 5.5H9.5L5 0.5Z" fill="#555"/></svg>

<!-- customizer -->
<div class="a" style="left:1351px;top:40px;width:14px;height:14px;background:#fff;border:1px solid #a9a9a9;border-radius:1px"></div>
<svg class="a" style="left:1351px;top:40px" width="14" height="14"><path d="M3 7.2L5.8 11L11 2.5" fill="none" stroke="#111" stroke-width="2"/></svg>
<div class="a ui" style="left:1370px;top:40px;line-height:16px">Automatic Preview</div>
<div class="a" style="left:1504px;top:36px;width:150px;height:23px;background:linear-gradient(#fafafa,#ececec);border:1px solid #b5b5b5;border-radius:3px"></div>
<div class="a ui" style="left:1509px;top:40px;line-height:16px">Show Details</div>
<div class="a" style="left:1351px;top:63px;width:214px;height:23px;background:#fff;border:1px solid #b5b5b5;border-radius:3px"></div>
<div class="a" style="left:1544px;top:64px;width:20px;height:21px;background:linear-gradient(#f6f6f6,#e8e8e8);border-left:1px solid #c8c8c8;border-radius:0 3px 3px 0"></div>
<svg class="a" style="left:1549px;top:71px" width="10" height="6"><path d="M0.5 0.5H9.5L5 5.5Z" fill="#666"/></svg>
<div class="a ui" style="left:1355px;top:67px;line-height:16px">New set 1</div>
<div class="a" style="left:1569px;top:63px;width:40px;height:23px;background:linear-gradient(#fafafa,#ececec);border:1px solid #b5b5b5;border-radius:3px;text-align:center;font-size:16px;line-height:20px">+</div>
<div class="a" style="left:1613px;top:63px;width:40px;height:23px;background:linear-gradient(#fafafa,#ececec);border:1px solid #b5b5b5;border-radius:3px;font-size:14px;line-height:20px;padding-left:18px">-</div>
<div class="a" style="left:1351px;top:90px;width:300px;height:690px;border-left:1px solid #b0b0b0;border-top:1px solid #b0b0b0"></div>
<div class="a" style="left:1352px;top:91px;width:287px;height:22px;background:#dadada;border-bottom:1px solid #c4c4c4;border-left:1px solid #c8c8c8"></div>
<svg class="a" style="left:1358px;top:98px" width="10" height="7"><path d="M0.5 0.5H8.5L4.5 5.5Z" fill="#555"/></svg>
<div class="a ui" style="left:1373px;top:95px;line-height:16px">O_ring</div>
<div class="a lbl" style="left:1356px;top:115px;line-height:16px">Show O ring</div>
<div class="a lbl" style="left:1356px;top:135px;line-height:16px">ShowCutPlane</div>
<div class="a" style="left:1628px;top:115px;width:20px;height:19px;background:#fff;border:1px solid #b5b5b5;border-radius:2px"></div>
<svg class="a" style="left:1631px;top:118px" width="10" height="14"><path d="M1 5L4.5 11L9 2" fill="none" stroke="#111" stroke-width="2.2"/></svg>
<div class="a" style="left:1628px;top:135px;width:20px;height:19px;background:#fff;border:1px solid #b5b5b5;border-radius:2px"></div>
<svg class="a" style="left:1631px;top:138px" width="10" height="14"><path d="M1 5L4.5 11L9 2" fill="none" stroke="#111" stroke-width="2.2"/></svg>
<div class="a lbl" style="left:1356px;top:158px;line-height:16px">O ring Diameter</div>
<div class="a spin ui" style="top:156px">13.09</div>
<div class="a" style="left:1633px;top:156px;width:12px;height:20px;background:linear-gradient(#f4f4f4,#e6e6e6);border:1px solid #bdbdbd"></div>
<svg class="a" style="left:1634px;top:156px" width="6" height="20"><path d="M0.5 8.5L3.5 5L6.5 8.5ZM0.5 11.5L3.5 15L6.5 11.5Z" fill="#777"/></svg>
<div class="a groove" style="top:186px"></div>
<div class="a fill" style="top:186px;width:13px"></div>
<div class="a handle" style="left:1366px;top:182px"></div>
<div class="a lbl" style="left:1356px;top:200px;line-height:16px">O ring Circle Radius</div>
<div class="a spin ui" style="top:198px">2.00</div>
<div class="a" style="left:1633px;top:198px;width:12px;height:20px;background:linear-gradient(#f4f4f4,#e6e6e6);border:1px solid #bdbdbd"></div>
<svg class="a" style="left:1634px;top:198px" width="6" height="20"><path d="M0.5 8.5L3.5 5L6.5 8.5ZM0.5 11.5L3.5 15L6.5 11.5Z" fill="#777"/></svg>
<div class="a groove" style="top:228px"></div>
<div class="a handle" style="left:1357px;top:224px"></div>
<div class="a lbl" style="left:1356px;top:242px;line-height:16px">O ring Fragments</div>
<div class="a spin ui" style="top:240px">100</div>
<div class="a" style="left:1633px;top:240px;width:12px;height:20px;background:linear-gradient(#f4f4f4,#e6e6e6);border:1px solid #bdbdbd"></div>
<svg class="a" style="left:1634px;top:240px" width="6" height="20"><path d="M0.5 8.5L3.5 5L6.5 8.5ZM0.5 11.5L3.5 15L6.5 11.5Z" fill="#777"/></svg>
<div class="a groove" style="top:270px"></div>
<div class="a fill" style="top:270px;width:142px"></div>
<div class="a handle" style="left:1495px;top:266px"></div>
<div class="a lbl" style="left:1356px;top:284px;line-height:16px">Rotate O ring X</div>
<div class="a spin ui" style="top:282px">0.00</div>
<div class="a" style="left:1633px;top:282px;width:12px;height:20px;background:linear-gradient(#f4f4f4,#e6e6e6);border:1px solid #bdbdbd"></div>
<svg class="a" style="left:1634px;top:282px" width="6" height="20"><path d="M0.5 8.5L3.5 5L6.5 8.5ZM0.5 11.5L3.5 15L6.5 11.5Z" fill="#777"/></svg>
<div class="a groove" style="top:312px"></div>
<div class="a handle" style="left:1357px;top:308px"></div>
<div class="a lbl" style="left:1356px;top:326px;line-height:16px">Rotate O ring Y</div>
<div class="a spin ui" style="top:324px">0.00</div>
<div class="a" style="left:1633px;top:324px;width:12px;height:20px;background:linear-gradient(#f4f4f4,#e6e6e6);border:1px solid #bdbdbd"></div>
<svg class="a" style="left:1634px;top:324px" width="6" height="20"><path d="M0.5 8.5L3.5 5L6.5 8.5ZM0.5 11.5L3.5 15L6.5 11.5Z" fill="#777"/></svg>
<div class="a groove" style="top:354px"></div>
<div class="a handle" style="left:1357px;top:350px"></div>
<div class="a lbl" style="left:1356px;top:368px;line-height:16px">Rotate O ring Z</div>
<div class="a spin ui" style="top:366px">0.00</div>
<div class="a" style="left:1633px;top:366px;width:12px;height:20px;background:linear-gradient(#f4f4f4,#e6e6e6);border:1px solid #bdbdbd"></div>
<svg class="a" style="left:1634px;top:366px" width="6" height="20"><path d="M0.5 8.5L3.5 5L6.5 8.5ZM0.5 11.5L3.5 15L6.5 11.5Z" fill="#777"/></svg>
<div class="a groove" style="top:396px"></div>
<div class="a handle" style="left:1357px;top:392px"></div>
<div class="a lbl" style="left:1356px;top:410px;line-height:16px">Move O ring X</div>
<div class="a spin ui" style="top:408px">0.00</div>
<div class="a" style="left:1633px;top:408px;width:12px;height:20px;background:linear-gradient(#f4f4f4,#e6e6e6);border:1px solid #bdbdbd"></div>
<svg class="a" style="left:1634px;top:408px" width="6" height="20"><path d="M0.5 8.5L3.5 5L6.5 8.5ZM0.5 11.5L3.5 15L6.5 11.5Z" fill="#777"/></svg>
<div class="a groove" style="top:438px"></div>
<div class="a handle" style="left:1357px;top:434px"></div>
<div class="a lbl" style="left:1356px;top:452px;line-height:16px">Move O ring Y</div>
<div class="a spin ui" style="top:450px">0.00</div>
<div class="a" style="left:1633px;top:450px;width:12px;height:20px;background:linear-gradient(#f4f4f4,#e6e6e6);border:1px solid #bdbdbd"></div>
<svg class="a" style="left:1634px;top:450px" width="6" height="20"><path d="M0.5 8.5L3.5 5L6.5 8.5ZM0.5 11.5L3.5 15L6.5 11.5Z" fill="#777"/></svg>
<div class="a groove" style="top:480px"></div>
<div class="a handle" style="left:1357px;top:476px"></div>
<div class="a lbl" style="left:1356px;top:494px;line-height:16px">Move O ring Z</div>
<div class="a spin ui" style="top:492px">22.00</div>
<div class="a" style="left:1633px;top:492px;width:12px;height:20px;background:linear-gradient(#f4f4f4,#e6e6e6);border:1px solid #bdbdbd"></div>
<svg class="a" style="left:1634px;top:492px" width="6" height="20"><path d="M0.5 8.5L3.5 5L6.5 8.5ZM0.5 11.5L3.5 15L6.5 11.5Z" fill="#777"/></svg>
<div class="a groove" style="top:522px"></div>
<div class="a fill" style="top:522px;width:18px"></div>
<div class="a handle" style="left:1371px;top:518px"></div>
<div class="a lbl" style="left:1356px;top:536px;line-height:16px">Scale O ring X</div>
<div class="a spin ui" style="top:534px">1.00</div>
<div class="a" style="left:1633px;top:534px;width:12px;height:20px;background:linear-gradient(#f4f4f4,#e6e6e6);border:1px solid #bdbdbd"></div>
<svg class="a" style="left:1634px;top:534px" width="6" height="20"><path d="M0.5 8.5L3.5 5L6.5 8.5ZM0.5 11.5L3.5 15L6.5 11.5Z" fill="#777"/></svg>
<div class="a groove" style="top:564px"></div>
<div class="a handle" style="left:1357px;top:560px"></div>
<div class="a lbl" style="left:1356px;top:578px;line-height:16px">Scale O ring Y</div>
<div class="a spin ui" style="top:576px">1.00</div>
<div class="a" style="left:1633px;top:576px;width:12px;height:20px;background:linear-gradient(#f4f4f4,#e6e6e6);border:1px solid #bdbdbd"></div>
<svg class="a" style="left:1634px;top:576px" width="6" height="20"><path d="M0.5 8.5L3.5 5L6.5 8.5ZM0.5 11.5L3.5 15L6.5 11.5Z" fill="#777"/></svg>
<div class="a groove" style="top:606px"></div>
<div class="a handle" style="left:1357px;top:602px"></div>
<div class="a lbl" style="left:1356px;top:620px;line-height:16px">Scale O ring Z</div>
<div class="a spin ui" style="top:618px">1.00</div>
<div class="a" style="left:1633px;top:618px;width:12px;height:20px;background:linear-gradient(#f4f4f4,#e6e6e6);border:1px solid #bdbdbd"></div>
<svg class="a" style="left:1634px;top:618px" width="6" height="20"><path d="M0.5 8.5L3.5 5L6.5 8.5ZM0.5 11.5L3.5 15L6.5 11.5Z" fill="#777"/></svg>
<div class="a groove" style="top:648px"></div>
<div class="a handle" style="left:1357px;top:644px"></div>
</body></html>
